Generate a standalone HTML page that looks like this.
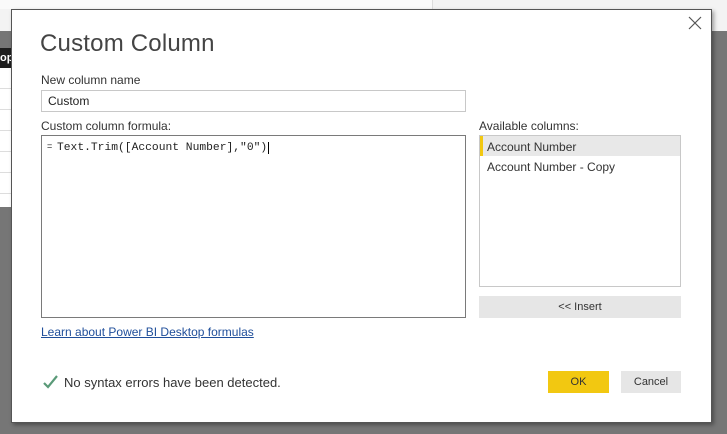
<!DOCTYPE html>
<html><head><style>
*{box-sizing:border-box;margin:0;padding:0}
body{width:727px;height:434px;position:relative;overflow:hidden;background:#767676;font-family:"Liberation Sans",sans-serif;font-size:12px;color:#333}
.abs{position:absolute}
</style></head><body>
<div class="abs" style="left:0;top:0;width:727px;height:31px;background:#f3f3f3"></div>
<div class="abs" style="left:0;top:0;width:433px;height:9px;background:#fafafa;border-right:1px solid #ddd"></div>
<div class="abs" style="left:0;top:48px;width:12px;height:20px;background:#1e1e1e;color:#fff;font-weight:bold;font-size:11px;line-height:20px;overflow:hidden">op</div>
<div class="abs" style="left:0;top:68px;width:12px;height:139px;background:#fff;background-image:repeating-linear-gradient(#fff 0 20px,#ddd 20px 21px)"></div>
<div class="abs" style="left:11px;top:9px;width:701px;height:414px;background:#fff;border:1px solid #555;box-shadow:2px 2px 4px rgba(0,0,0,.35)"></div>
<svg class="abs" style="left:688px;top:16px" width="14" height="14"><path d="M1 1L13 13M13 1L1 13" stroke="#555" stroke-width="1.2"/></svg>
<div class="abs" style="left:40px;top:30px;font-size:24px;font-weight:300;color:#444;letter-spacing:0.2px">Custom Column</div>
<div class="abs" style="left:41px;top:73px">New column name</div>
<div class="abs" style="left:41px;top:90px;width:425px;height:22px;border:1px solid #c8c8c8;padding:3px 6px;color:#222">Custom</div>
<div class="abs" style="left:41px;top:119px">Custom column formula:</div>
<div class="abs" style="left:41px;top:135px;width:425px;height:183px;border:1px solid #7a7a7a"></div>
<div class="abs" style="left:47px;top:141px;font-size:9px;color:#222">=</div>
<div class="abs" style="left:57px;top:142px;font-family:'Liberation Mono',monospace;font-size:11.3px;color:#222">Text.Trim([Account Number],"0")<span style="border-left:1px solid #000;margin-left:1px"></span></div>
<div class="abs" style="left:479px;top:119px">Available columns:</div>
<div class="abs" style="left:479px;top:135px;width:202px;height:152px;border:1px solid #c8c8c8"></div>
<div class="abs" style="left:480px;top:136px;width:200px;height:20px;background:#e8e8e8;border-left:3px solid #f2c811"></div>
<div class="abs" style="left:487px;top:140px">Account Number</div>
<div class="abs" style="left:487px;top:160px">Account Number - Copy</div>
<div class="abs" style="left:479px;top:296px;width:202px;height:22px;background:#e6e6e6;text-align:center;line-height:22px;font-size:11px">&lt;&lt; Insert</div>
<div class="abs" style="left:41px;top:325px;color:#1f4e9a;text-decoration:underline">Learn about Power BI Desktop formulas</div>
<svg class="abs" style="left:43px;top:375px" width="15" height="14"><path d="M1 8L5 12L14 1" stroke="#5a9a78" stroke-width="2.2" fill="none"/></svg>
<div class="abs" style="left:64px;top:375px;font-size:13px">No syntax errors have been detected.</div>
<div class="abs" style="left:548px;top:371px;width:61px;height:22px;background:#f2c811;text-align:center;line-height:22px;font-size:11px">OK</div>
<div class="abs" style="left:621px;top:371px;width:60px;height:22px;background:#e6e6e6;text-align:center;line-height:22px;font-size:11px">Cancel</div>
</body></html>
